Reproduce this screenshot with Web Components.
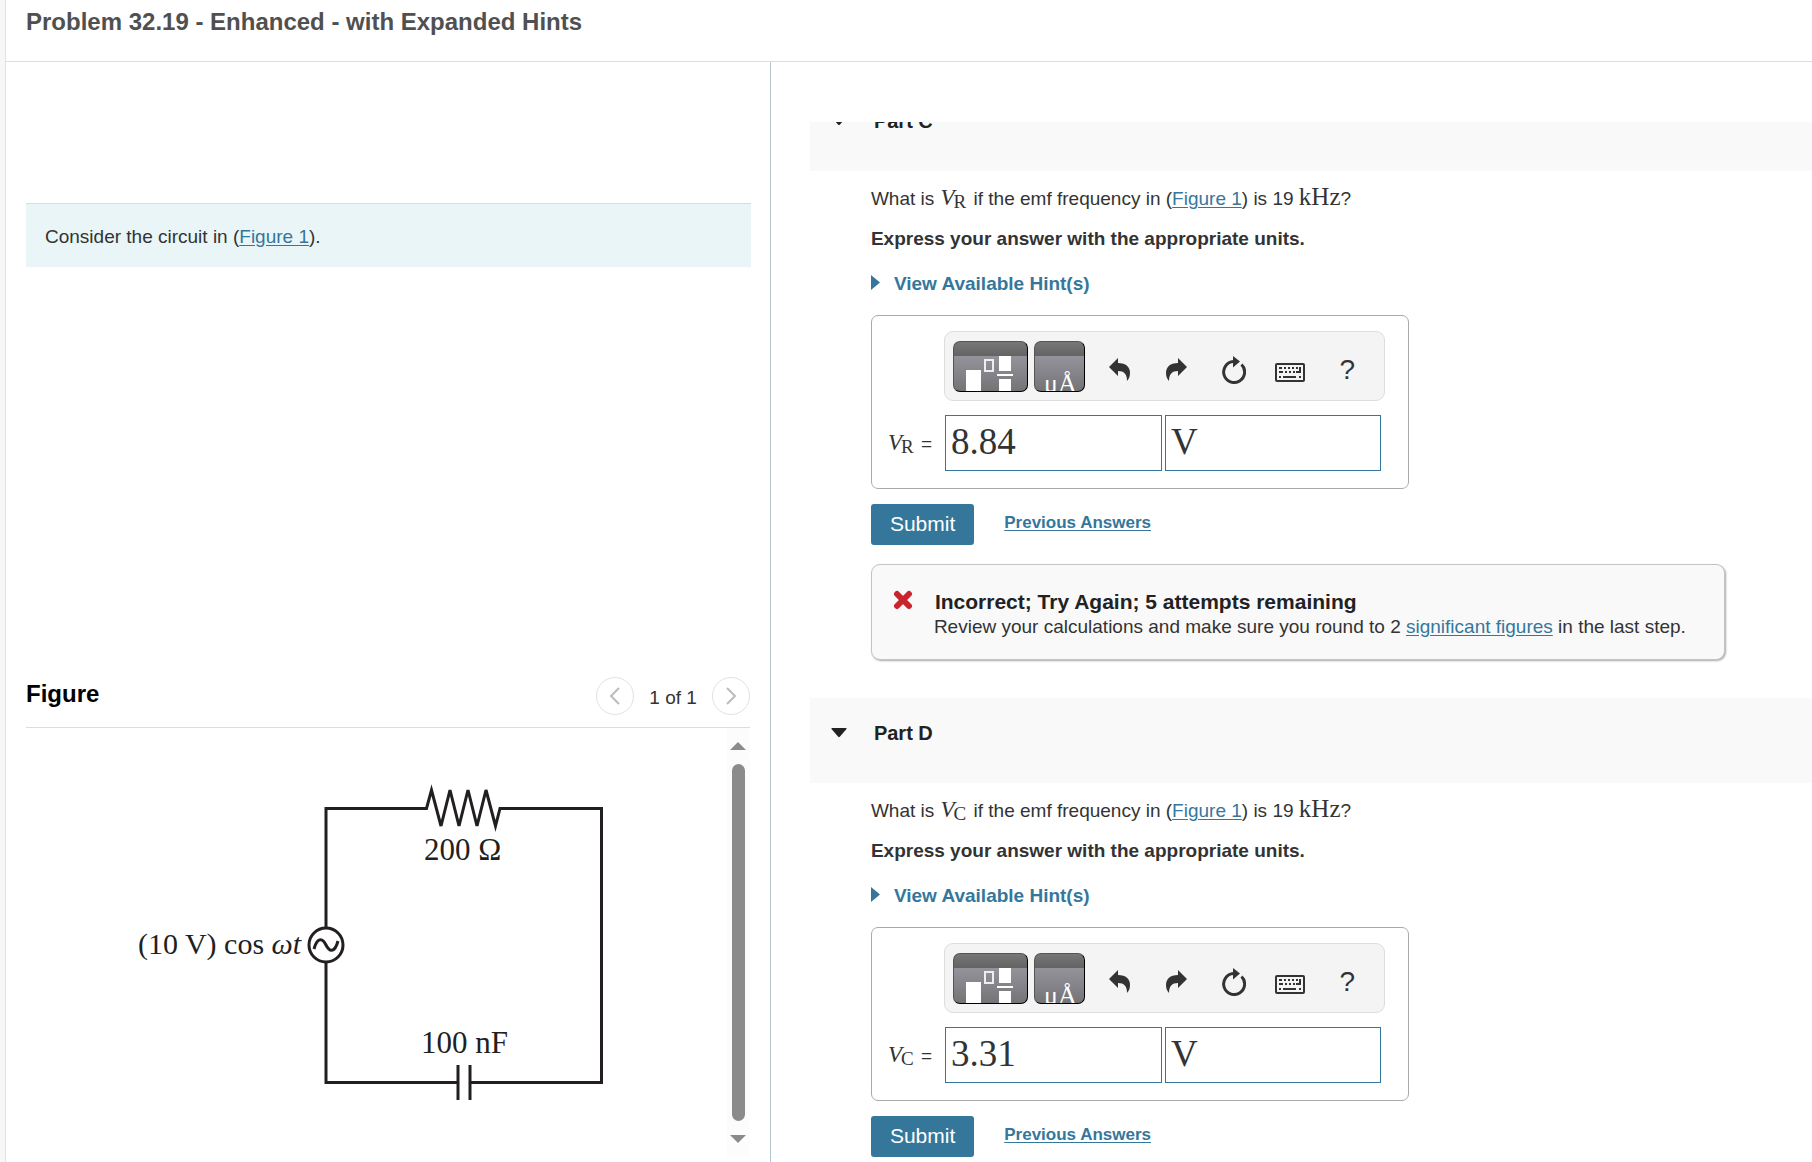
<!DOCTYPE html>
<html lang="en">
<head>
<meta charset="utf-8">
<title>Problem 32.19</title>
<style>
  body {
    margin: 0;
    font-family: "Liberation Sans", Arial, sans-serif;
    font-size: 19px;
    line-height: 24px;
    color: #333;
    background: #fff;
    --link: #35779b;
    --serif: "Liberation Serif", "Times New Roman", serif;
  }
</style>
</head>
<body>
<problem-page>
  <span slot="title">Problem 32.19 - Enhanced - with Expanded Hints</span>
  <intro-box slot="left"></intro-box>
  <figure-viewer slot="figure"><circuit-diagram></circuit-diagram></figure-viewer>
  <part-panel slot="right" name="Part C" sub="R" value="8.84" unit="V">
    <answer-feedback>
      <span slot="title">Incorrect; Try Again; 5 attempts remaining</span>
    </answer-feedback>
  </part-panel>
  <part-panel slot="right" name="Part D" sub="C" value="3.31" unit="V"></part-panel>
</problem-page>

<script>
const linkStyle = `
  a { color: var(--link); text-decoration: underline; text-underline-offset: 2px; }
`;

// Creates the open shadow root and fills it
function attach(el, html) {
  const template = document.createElement('template');
  template.innerHTML = html;
  el.attachShadow({ mode: 'open' }).appendChild(template.content.cloneNode(true));
}

// Page frame: title bar, left column, scrolling right column
class ProblemPage extends HTMLElement {
  constructor() {
    super();
    attach(this, `
      <style>
        :host {
          display: flex;
          height: 100vh;
          overflow: hidden;
        }
        .edge {
          flex: 0 0 5px;
          background: #f7f7f7;
          border-right: 1px solid #e2e2e2;
        }
        .page {
          flex: 1;
          min-width: 0;
          display: flex;
          flex-direction: column;
        }
        header {
          box-sizing: border-box;
          height: 62px;
          padding: 8px 20px;
          border-bottom: 1px solid #ddd;
        }
        h1 {
          margin: 0;
          font-size: 24px;
          line-height: 28px;
          color: #505050;
        }
        main {
          flex: 1;
          min-height: 0;
          display: grid;
          grid-template-columns: 36fr 49fr;
          grid-template-rows: minmax(0, 1fr);
        }
        .left {
          display: flex;
          flex-direction: column;
          padding: 0 19px 0 20px;
          border-right: 1px solid #b8c9d6;
        }
        .intro {
          flex: 1;
          padding-top: 141px;
        }
        .right {
          min-width: 0;
          display: flex;
          flex-direction: column;
          padding: 60px 0 0 39px;
        }
        .scroller {
          flex: 1;
          min-height: 0;
          overflow-y: auto;
          scrollbar-width: none;
        }
      </style>
      <div class="edge"></div>
      <div class="page">
        <header><h1><slot name="title"></slot></h1></header>
        <main>
          <section class="left">
            <div class="intro"><slot name="left"></slot></div>
            <slot name="figure"></slot>
          </section>
          <section class="right">
            <div class="scroller"><slot name="right"></slot></div>
          </section>
        </main>
      </div>
    `);
  }

  scrollParts(top) {
    this.shadowRoot.querySelector('.scroller').scrollTop = top;
  }
}

class IntroBox extends HTMLElement {
  constructor() {
    super();
    attach(this, `
      <style>
        :host {
          display: block;
          padding: 21px 19px 18px;
          background: #e9f5f7;
          border-top: 1px solid #d8dddd;
        }
        ${linkStyle}
      </style>
      Consider the circuit in (<a href="#figure">Figure 1</a>).
    `);
  }
}

class FigureViewer extends HTMLElement {
  constructor() {
    super();
    attach(this, `
      <style>
        :host {
          display: block;
          margin-right: 1px;
        }
        .bar {
          display: flex;
          align-items: center;
          height: 59px;
          border-bottom: 1px solid #ddd;
        }
        h2 {
          flex: 1;
          margin: 0;
          font-size: 24px;
          line-height: 28px;
          padding-bottom: 8px;
          color: #000;
        }
        nav {
          display: flex;
          align-items: center;
          gap: 15px;
          padding-bottom: 4px;
        }
        nav span { padding-top: 4px; }
        nav button {
          display: grid;
          place-items: center;
          width: 38px;
          height: 38px;
          padding: 0;
          border: 1px solid #e2e2e2;
          border-radius: 50%;
          background: #fff;
        }
        .view { display: flex; }
        .canvas { flex: 1; }
        .track {
          display: flex;
          flex-direction: column;
          align-items: center;
          width: 23px;
          height: 401px;
          margin-bottom: 5px;
          padding: 14px 0;
          gap: 14px;
          background: #fcfcfc;
        }
        .track svg { flex: none; fill: #8b8b8b; }
        .thumb {
          flex: 1;
          width: 13px;
          border-radius: 7px;
          background: #8b8b8b;
        }
      </style>
      <div class="bar">
        <h2>Figure</h2>
        <nav>
          <button aria-label="Previous figure">
            <svg width="12" height="18" fill="none" stroke="#bbb" stroke-width="2"><path d="M10 1 2 9l8 8"/></svg>
          </button>
          <span>1 of 1</span>
          <button aria-label="Next figure">
            <svg width="12" height="18" fill="none" stroke="#bbb" stroke-width="2"><path d="m2 1 8 8-8 8"/></svg>
          </button>
        </nav>
      </div>
      <div class="view">
        <div class="canvas"><slot></slot></div>
        <div class="track">
          <svg width="16" height="8"><path d="M8 0 16 8H0z"/></svg>
          <div class="thumb"></div>
          <svg width="16" height="8"><path d="M0 0h16L8 8z"/></svg>
        </div>
      </div>
    `);
  }
}

// AC source, resistor and capacitor in series
class CircuitDiagram extends HTMLElement {
  constructor() {
    super();
    attach(this, `
      <style>
        :host { display: block; }
        svg { display: block; }
        text { font: 31px var(--serif); fill: #231f20; }
        .wire { fill: none; stroke: #231f20; stroke-width: 3; }
      </style>
      <svg width="600" height="429" viewBox="0 0 600 429">
        <g class="wire">
          <path d="M300 199V80.500H400.500L405.500 62 415 98 424 62 433 98 442 62 451 98 460 62 469.500 98 474 80.500H575.500V354.500H444"/>
          <path d="M300 235V354.500H432"/>
          <path d="M432 337v35M444 337v35"/>
          <circle cx="300" cy="217" r="17"/>
          <path d="M288 221c3-11 8-12 12-4s9 7 12-4"/>
        </g>
        <text x="398" y="132">200 Ω</text>
        <text x="395" y="325">100 nF</text>
        <text x="112" y="226" style="font-size: 30px">(10 V) cos <tspan font-style="italic">ωt</tspan></text>
      </svg>
    `);
  }
}

// Italic V with an upright subscript
class MathVar extends HTMLElement {
  constructor() {
    super();
    attach(this, `
      <style>
        :host {
          display: inline-block;
          margin: 0 2px 0 1px;
          font-family: var(--serif);
          font-size: 23px;
          line-height: 24px;
        }
        i { margin-right: -1px; }
        sub { font-size: 19px; line-height: 1px; vertical-align: -3px; }
      </style>
      <i>V</i><sub><slot></slot></sub>
    `);
  }
}

class MathToolbar extends HTMLElement {
  constructor() {
    super();
    attach(this, `
      <style>
        :host {
          display: flex;
          align-items: center;
          box-sizing: border-box;
          height: 70px;
          padding: 0 8px;
          border: 1px solid #ddd;
          border-radius: 9px;
          background: #f4f4f4;
        }
        button {
          padding: 0;
          border: 0;
          background: none;
          font: 28px "Liberation Sans", Arial, sans-serif;
          color: #333;
        }
        .palette {
          box-sizing: border-box;
          height: 51px;
          margin-right: 6px;
          overflow: hidden;
          border: 1px solid #000;
          border-top-color: #555;
          border-left-color: #555;
          border-radius: 7px;
          background: linear-gradient(#777, #636363 14px, #94939b 14px, #747477);
        }
        .templates { width: 75px; }
        .units { width: 51px; }
        .palette svg { display: block; }
        .units text { font: 26px var(--serif); fill: #fff; }
        .icons {
          flex: 1;
          display: grid;
          grid-template-columns: repeat(5, 1fr);
          justify-items: center;
          align-items: center;
          padding-top: 7px;
        }
        .icons svg { display: block; fill: #333; }
      </style>
      <button class="palette templates" aria-label="Templates">
        <svg width="73" height="49" fill="#fff">
          <path d="M12 28h15v22H12zM45 14h12v15H45zM43 32h16v2H43zM45 37h12v12H45z"/>
          <path d="M31 18h8v11h-8z" fill="none" stroke="#eee" stroke-width="2"/>
        </svg>
      </button>
      <button class="palette units" aria-label="Units">
        <svg width="49" height="49"><text x="9" y="50">μ</text><text x="23" y="50">Å</text></svg>
      </button>
      <div class="icons">
        <button aria-label="Undo">
          <svg width="21" height="23"><path d="M0 9 9 0v5c8 0 12 4 12 10 0 3-1 6-3 8 0-7-3-10-9-10v5z"/></svg>
        </button>
        <button aria-label="Redo">
          <svg width="21" height="23"><path d="M21 9 12 0v5C4 5 0 9 0 15c0 3 1 6 3 8 0-7 3-10 9-10v5z"/></svg>
        </button>
        <button aria-label="Reset">
          <svg width="25" height="28">
            <path d="M20.500 8.500A10.500 10.500 0 1 1 12.500 5.500" fill="none" stroke="#333" stroke-width="3"/>
            <path d="m12 0 7 5.500-7 6z"/>
          </svg>
        </button>
        <button aria-label="Keyboard shortcuts">
          <svg width="30" height="24">
            <rect x="1" y="6" width="28" height="17" rx="1" fill="none" stroke="#333" stroke-width="2"/>
            <path d="M4 9h3v2H4zM9 9h2v2H9zM13 9h2v2h-2zM17 9h2v2h-2zM21 9h2v2h-2zM24 9h2v6h-5v-2h3zM4 13h4v2H4zM10 13h2v2h-2zM14 13h2v2h-2zM18 13h2v2h-2zM4 18h2v2H4zM8 18h13v2H8zM24 18h2v2h-2z"/>
          </svg>
        </button>
        <button aria-label="Help">?</button>
      </div>
    `);
  }
}

class AnswerFeedback extends HTMLElement {
  constructor() {
    super();
    attach(this, `
      <style>
        :host {
          display: flex;
          gap: 21px;
          margin-top: 19px;
          padding: 25px 20px 20px 21px;
          border: 1px solid #c4c4c4;
          border-radius: 9px;
          background: #f9f9f9;
          box-shadow: 1px 1px 2px #aaa;
        }
        svg { flex: none; }
        p { margin: 0; }
        .title {
          padding: 0 0 1px 1px;
          font-size: 21px;
          font-weight: bold;
          color: #222;
        }
        ${linkStyle}
      </style>
      <svg width="20" height="20"><path d="M4 4l12 12M16 4 4 16" stroke="#c9252c" stroke-width="6" stroke-linecap="round"/></svg>
      <div>
        <p class="title"><slot name="title"></slot></p>
        <p>Review your calculations and make sure you round to 2 <a href="#figures">significant figures</a> in the last step.</p>
      </div>
    `);
  }
}

class PartPanel extends HTMLElement {
  connectedCallback() {
    if (this.shadowRoot) return;
    const name = this.getAttribute('name');
    const sub = this.getAttribute('sub');
    attach(this, `
      <style>
        :host { display: block; }
        .head {
          display: flex;
          align-items: center;
          gap: 27px;
          box-sizing: border-box;
          height: 85px;
          padding: 0 21px 16px;
          background: #f9f9f9;
        }
        h2 {
          margin: 0;
          font-size: 20px;
          color: #222;
        }
        .body { padding: 15px 87px 38px 61px; }
        p { margin: 0 0 16px; }
        .unit { font-family: var(--serif); font-size: 25px; line-height: 1px; }
        .hints {
          display: flex;
          align-items: center;
          gap: 14px;
          margin: 21px 0 19px;
          padding: 0;
          border: 0;
          background: none;
          font: bold 19px/24px "Liberation Sans", Arial, sans-serif;
          color: var(--link);
        }
        .hints svg { margin-bottom: 3px; }
        .box {
          display: grid;
          grid-template-columns: 56px 217px 216px;
          align-items: center;
          gap: 14px 3px;
          box-sizing: border-box;
          width: 538px;
          max-width: 100%;
          padding: 15px 14px 17px;
          border: 1px solid #aaa;
          border-radius: 7px;
        }
        math-toolbar { grid-column: 2 / 4; margin: 0 -4px 0 -1px; }
        label { padding-left: 1px; white-space: nowrap; }
        input {
          box-sizing: border-box;
          width: 100%;
          height: 56px;
          padding: 0 5px 4px;
          border: 1px solid var(--link);
          font: 37px var(--serif);
          color: #333;
        }
        .actions {
          display: flex;
          align-items: center;
          gap: 30px;
          margin-top: 15px;
        }
        .submit {
          height: 41px;
          padding: 0 19px 1px;
          border: 0;
          border-radius: 3px;
          background: var(--link);
          color: #fff;
          font: 21px "Liberation Sans", Arial, sans-serif;
        }
        .actions a { font-size: 17px; font-weight: bold; padding-bottom: 3px; }
        ${linkStyle}
      </style>
      <div class="head">
        <svg width="16" height="9" fill="#222"><path d="M1 0h14q1 0 .5 1L9 8.500q-1 1-2 0L.5 1Q0 0 1 0z"/></svg>
        <h2>${name}</h2>
      </div>
      <div class="body">
        <p>What is <math-var>${sub}</math-var> if the emf frequency in (<a href="#figure">Figure 1</a>) is 19 <span class="unit">kHz</span>?</p>
        <p><b>Express your answer with the appropriate units.</b></p>
        <button class="hints">
          <svg width="9" height="15" fill="#35779b"><path d="M0 0 9 7.500 0 15z"/></svg>
          View Available Hint(s)
        </button>
        <div class="box">
          <math-toolbar></math-toolbar>
          <label for="value"><math-var>${sub}</math-var> =</label>
          <input id="value" value="${this.getAttribute('value')}">
          <input aria-label="Units" value="${this.getAttribute('unit')}">
        </div>
        <div class="actions">
          <button class="submit">Submit</button>
          <a href="#previous">Previous Answers</a>
        </div>
        <slot></slot>
      </div>
    `);
  }
}

// Register components
customElements.define('math-var', MathVar);
customElements.define('math-toolbar', MathToolbar);
customElements.define('intro-box', IntroBox);
customElements.define('circuit-diagram', CircuitDiagram);
customElements.define('figure-viewer', FigureViewer);
customElements.define('answer-feedback', AnswerFeedback);
customElements.define('part-panel', PartPanel);
customElements.define('problem-page', ProblemPage);

document.querySelector('problem-page').scrollParts(36);
</script>
</body>
</html>
